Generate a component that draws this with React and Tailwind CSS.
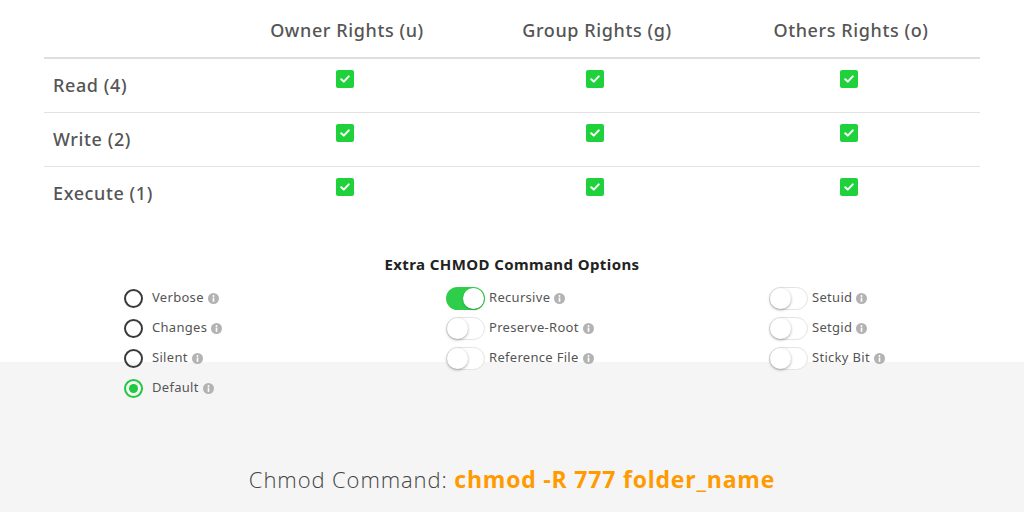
import React from "react";

const headers = ["Owner Rights (u)", "Group Rights (g)", "Others Rights (o)"];
const rows = ["Read (4)", "Write (2)", "Execute (1)"];

function CheckBox() {
  return (
    <span className="w-[18px] h-[18px] rounded-[2px] bg-[#1fd23c] flex items-center justify-center">
      <svg width="12" height="12" viewBox="0 0 12 12" fill="none">
        <path d="M2.2 6.2 L4.8 8.6 L9.8 3.4" stroke="white" strokeWidth="2" strokeLinecap="round" strokeLinejoin="round" />
      </svg>
    </span>
  );
}

function Info() {
  return (
    <svg width="11" height="11" viewBox="0 0 12 12" className="ml-[4px] shrink-0">
      <circle cx="6" cy="6" r="6" fill="#b3b3b3" />
      <rect x="5.1" y="5" width="1.8" height="4.6" fill="white" />
      <circle cx="6" cy="3.3" r="1" fill="white" />
    </svg>
  );
}

function Radio({ on }) {
  return on ? (
    <span className="w-[19px] h-[19px] rounded-full border-2 border-[#21c841] flex items-center justify-center mr-[5px]">
      <span className="w-[9px] h-[9px] rounded-full bg-[#21c841]" />
    </span>
  ) : (
    <span className="w-[19px] h-[19px] rounded-full border-2 border-[#3a3a3a] mr-[5px]" />
  );
}

function Toggle({ on }) {
  return on ? (
    <span className="w-[39px] h-[23px] rounded-full bg-[#2fce4a] flex items-center justify-end pr-[1px]">
      <span className="w-[21px] h-[21px] rounded-full bg-white shadow-[0_1px_2px_rgba(0,0,0,0.25)]" />
    </span>
  ) : (
    <span className="w-[39px] h-[23px] rounded-full bg-white border border-[#e3e3e3] flex items-center">
      <span className="w-[21px] h-[21px] rounded-full bg-white shadow-[0_1px_3px_rgba(0,0,0,0.35)]" />
    </span>
  );
}

function Option({ control, label }) {
  return (
    <div className="flex items-center h-[30px]">
      {control}
      <span className="text-[13px] tracking-[0.3px] text-[#555] ml-[4px]">{label}</span>
      <Info />
    </div>
  );
}

export default function App() {
  return (
    <div
      className="w-[1024px] h-[512px] overflow-hidden bg-[linear-gradient(to_bottom,#ffffff_362px,#f5f5f5_362px)]"
      style={{ fontFamily: "'Noto Sans', 'Open Sans', sans-serif" }}
    >
      {/* Permissions table */}
      <div className="ml-[44px] w-[936px]">
        <div className="grid grid-cols-[178px_250px_250px_1fr] h-[59px] border-b-2 border-[#dedede] pt-[17px]">
          <div />
          {headers.map((h) => (
            <div key={h} className="text-center text-[18px] leading-[27px] font-medium tracking-[0.6px] text-[#555]">
              {h}
            </div>
          ))}
        </div>
        {rows.map((r, i) => (
          <div
            key={r}
            className={`grid grid-cols-[178px_250px_250px_1fr] h-[54px] ${i < 2 ? "border-b border-[#e2e2e2]" : ""}`}
          >
            <div className="pl-[9px] pt-[13px] text-[18px] leading-[27px] font-medium tracking-[0.6px] text-[#555]">{r}</div>
            {headers.map((h) => (
              <div key={h} className="flex justify-center pt-[11px] pr-[5px]">
                <CheckBox />
              </div>
            ))}
          </div>
        ))}
      </div>

      {/* Extra options */}
      <div className="mt-[33px] text-center text-[15px] leading-[20px] font-bold tracking-[0.4px] text-[#222]">
        Extra CHMOD Command Options
      </div>
      <div className="grid grid-cols-[322px_323px_1fr] pl-[124px] mt-[9px]">
        <div className="flex flex-col">
          <Option control={<Radio />} label="Verbose" />
          <Option control={<Radio />} label="Changes" />
          <Option control={<Radio />} label="Silent" />
          <Option control={<Radio on />} label="Default" />
        </div>
        <div className="flex flex-col">
          <Option control={<Toggle on />} label="Recursive" />
          <Option control={<Toggle />} label="Preserve-Root" />
          <Option control={<Toggle />} label="Reference File" />
        </div>
        <div className="flex flex-col">
          <Option control={<Toggle />} label="Setuid" />
          <Option control={<Toggle />} label="Setgid" />
          <Option control={<Toggle />} label="Sticky Bit" />
        </div>
      </div>

      {/* Command output */}
      <div className="mt-[59px] flex justify-center items-baseline" style={{ fontFamily: "'Open Sans', sans-serif" }}>
        <span className="text-[22px] font-light tracking-[0.9px] text-[#444]">
          Chmod Command:&nbsp;
        </span>
        <span className="text-[23px] font-bold tracking-[0.8px] text-[#ff9a00]">
          chmod -R 777 folder_name
        </span>
      </div>
    </div>
  );
}
